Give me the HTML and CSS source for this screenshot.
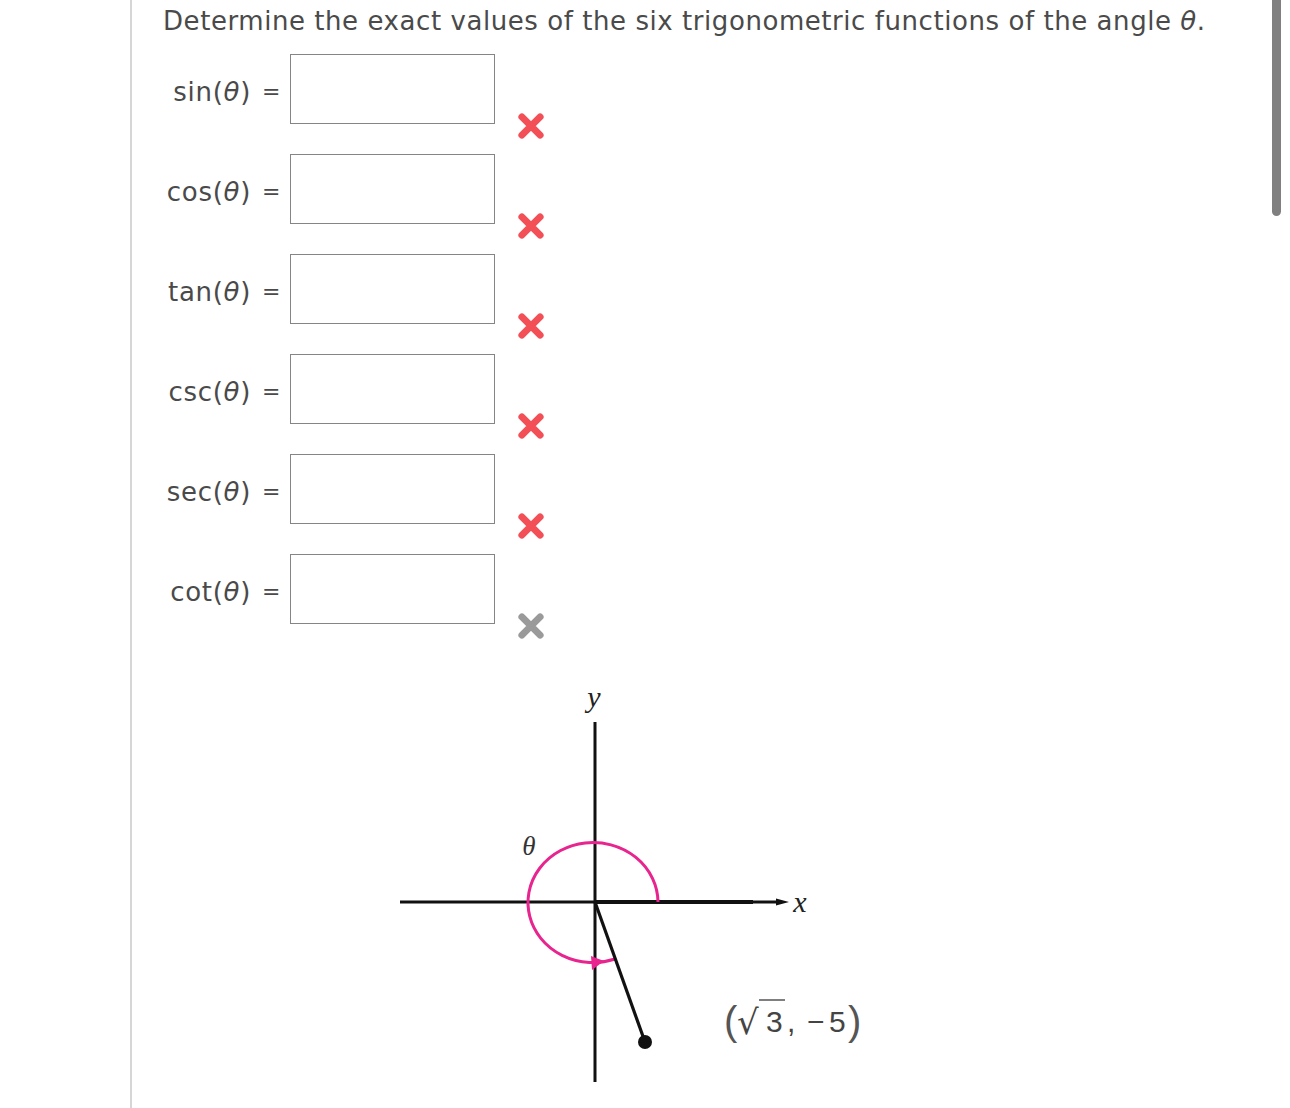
FILE: index.html
```html
<!DOCTYPE html>
<html>
<head>
<meta charset="utf-8">
<link rel="stylesheet" href="styles.css">
</head>
<body>
<div class="page">
  <div class="panel">
    <p class="question">Determine the exact values of the six trigonometric functions of the angle <i class="theta">θ</i>.</p>
    <div class="rows">
      <div class="row"><span class="label">sin(<i class="theta">θ</i>)</span><span class="eq">=</span><span class="box"></span><svg class="mark bad" viewBox="0 0 28 28"><path d="M5.5 5.5 L22.5 22.5 M22.5 5.5 L5.5 22.5"/></svg></div>
      <div class="row"><span class="label">cos(<i class="theta">θ</i>)</span><span class="eq">=</span><span class="box"></span><svg class="mark bad" viewBox="0 0 28 28"><path d="M5.5 5.5 L22.5 22.5 M22.5 5.5 L5.5 22.5"/></svg></div>
      <div class="row"><span class="label">tan(<i class="theta">θ</i>)</span><span class="eq">=</span><span class="box"></span><svg class="mark bad" viewBox="0 0 28 28"><path d="M5.5 5.5 L22.5 22.5 M22.5 5.5 L5.5 22.5"/></svg></div>
      <div class="row"><span class="label">csc(<i class="theta">θ</i>)</span><span class="eq">=</span><span class="box"></span><svg class="mark bad" viewBox="0 0 28 28"><path d="M5.5 5.5 L22.5 22.5 M22.5 5.5 L5.5 22.5"/></svg></div>
      <div class="row"><span class="label">sec(<i class="theta">θ</i>)</span><span class="eq">=</span><span class="box"></span><svg class="mark bad" viewBox="0 0 28 28"><path d="M5.5 5.5 L22.5 22.5 M22.5 5.5 L5.5 22.5"/></svg></div>
      <div class="row"><span class="label">cot(<i class="theta">θ</i>)</span><span class="eq">=</span><span class="box"></span><svg class="mark none" viewBox="0 0 28 28"><path d="M5.5 5.5 L22.5 22.5 M22.5 5.5 L5.5 22.5"/></svg></div>
    </div>
    <svg class="figure" width="490" height="420" viewBox="0 0 490 420">
      <line x1="215" y1="42" x2="215" y2="402" stroke="#111" stroke-width="3"/>
      <line x1="20" y1="222" x2="400" y2="222" stroke="#111" stroke-width="3"/>
      <line x1="215" y1="222" x2="373" y2="222" stroke="#111" stroke-width="4"/>
      <path d="M396 218.5 L409 222 L396 225.5 Z" fill="#111"/>
      <path d="M278 222 A65 60 0 1 0 235 279" fill="none" stroke="#e8248e" stroke-width="3"/>
      <path d="M211 276 L224 281 L212 290 Z" fill="#e8248e"/>
      <line x1="215" y1="222" x2="265" y2="362" stroke="#111" stroke-width="3.2"/>
      <circle cx="265" cy="362" r="7" fill="#111"/>
      <text x="214" y="27" class="var" text-anchor="middle">y</text>
      <text x="420" y="232" class="var" text-anchor="middle">x</text>
      <text x="149" y="175" class="thlabel" text-anchor="middle">θ</text>
      <text x="344" y="355" class="paren">(</text>
      <text x="357" y="354" class="rad">√</text>
      <line x1="379" y1="320" x2="405" y2="320" stroke="#555" stroke-width="1.5"/>
      <text x="386" y="352" class="pt">3</text>
      <text x="407" y="352" class="pt">,</text>
      <text x="427" y="352" class="pt">−</text>
      <text x="449" y="352" class="pt">5</text>
      <text x="468" y="355" class="paren">)</text>
    </svg>
  </div>
</div>
<div class="scrollbar"></div>
</body>
</html>
```

FILE: styles.css
```css
html, body {
  margin: 0;
  padding: 0;
  background: #fff;
}
body {
  font-family: "DejaVu Sans", Verdana, sans-serif;
  color: #4a4a4a;
  overflow: hidden;
}
.page {
  padding-left: 130px;
  height: 1108px;
}
.panel {
  border-left: 2px solid #d6d6d6;
  height: 1108px;
  padding-left: 31px;
  box-sizing: border-box;
}
.question {
  margin: 0;
  padding-top: 4px;
  font-size: 26px;
  line-height: 34px;
  letter-spacing: 0.56px;
}
.theta {
  font-style: italic;
}
.rows {
  margin-top: 15px;
  display: flex;
  flex-direction: column;
  gap: 29px;
}
.row {
  display: flex;
  align-items: center;
  height: 71px;
}
.label {
  width: 88px;
  text-align: right;
  font-size: 26px;
  letter-spacing: 0.7px;
  padding-top: 6px;
}
.eq {
  font-size: 22px;
  margin-left: 11px;
  width: 28px;
  padding-top: 6px;
}
.box {
  width: 203px;
  height: 68px;
  border: 1.5px solid #858585;
  background: #fff;
}
.mark {
  width: 30px;
  height: 30px;
  margin-left: 21px;
  align-self: flex-end;
  margin-bottom: -17px;
}
.mark path {
  stroke-width: 6.5;
  stroke-linecap: round;
  fill: none;
}
.mark.bad path {
  stroke: #f24f56;
}
.mark.none path {
  stroke: #9a9a9a;
}
.figure {
  display: block;
  margin-top: 56px;
  margin-left: 217px;
}
.var {
  font-family: "Liberation Serif", serif;
  font-style: italic;
  font-size: 30px;
  fill: #222;
}
.thlabel {
  font-family: "Liberation Serif", serif;
  font-style: italic;
  font-size: 27px;
  fill: #333;
}
.pt {
  font-family: "Liberation Sans", sans-serif;
  font-size: 30px;
  fill: #444;
}
.rad {
  font-family: "DejaVu Sans", sans-serif;
  font-size: 34px;
  fill: #444;
}
.paren {
  font-family: "Liberation Sans", sans-serif;
  font-size: 40px;
  fill: #555;
}
.scrollbar {
  position: absolute;
  top: 0;
  left: 1272px;
  width: 9px;
  height: 216px;
  background: #808080;
  border-radius: 0 0 5px 5px;
}
```
